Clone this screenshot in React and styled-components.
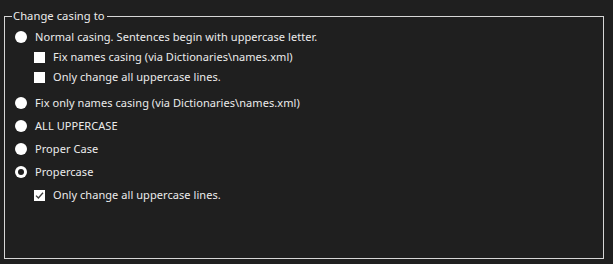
import React from "react";
import styled, { createGlobalStyle } from "styled-components";

const Global = createGlobalStyle`
  html, body { margin: 0; padding: 0; background: #1f1f1f; }
  body { font-family: "Noto Sans", "Open Sans", sans-serif; font-size: 11px; letter-spacing: 0.06px; color: #ececec; }
  #root { width: 613px; height: 264px; }
`;

const Page = styled.div`
  width: 613px;
  height: 264px;
  box-sizing: border-box;
  padding: 8px 0 0 4px;
  background: #1f1f1f;
`;

const Group = styled.fieldset`
  box-sizing: border-box;
  width: 600px;
  height: 251px;
  margin: 0;
  padding: 0;
  border: 1px solid #d6d6d6;
  min-inline-size: 0;
`;

const Legend = styled.legend`
  margin-left: 7px;
  padding: 0 2px 0 1px;
  font-size: 11.2px;
  line-height: 16px;
  color: #ececec;
`;

const Content = styled.div`
  display: flex;
  flex-direction: column;
  padding: 3px 0 0 10px;
`;

const Row = styled.label`
  display: flex;
  align-items: center;
  height: 20px;
  margin-top: ${(p) => p.$top || 0}px;
  padding-left: ${(p) => (p.$indent ? 19 : 0)}px;
  gap: 8px;
  white-space: nowrap;
`;

const Radio = styled.span`
  box-sizing: border-box;
  width: 12px;
  height: 12px;
  border-radius: 50%;
  background: #ffffff;
  position: relative;
  flex: none;
  &::after {
    content: "";
    display: ${(p) => (p.$checked ? "block" : "none")};
    position: absolute;
    left: 3px;
    top: 3px;
    width: 6px;
    height: 6px;
    border-radius: 50%;
    background: #1f1f1f;
  }
`;

const Box = styled.span`
  box-sizing: border-box;
  width: 11px;
  height: 11px;
  background: #ffffff;
  display: flex;
  align-items: center;
  justify-content: center;
  flex: none;
`;

const Text = styled.span`
  line-height: 16px;
`;

const Check = () => (
  <svg width="9" height="9" viewBox="0 0 9 9">
    <path d="M1 4.6 L3.4 7 L8 1.8" fill="none" stroke="#3a3a3a" strokeWidth="1.3" />
  </svg>
);

export default function App() {
  return (
    <>
      <Global />
      <Page>
        <Group>
          <Legend>Change casing to</Legend>
          <Content>
            <Row>
              <Radio />
              <Text>Normal casing. Sentences begin with uppercase letter.</Text>
            </Row>
            <Row $indent>
              <Box />
              <Text>Fix names casing (via Dictionaries\names.xml)</Text>
            </Row>
            <Row $indent>
              <Box />
              <Text>Only change all uppercase lines.</Text>
            </Row>
            <Row $top={6}>
              <Radio />
              <Text>Fix only names casing (via Dictionaries\names.xml)</Text>
            </Row>
            <Row $top={3}>
              <Radio />
              <Text>ALL UPPERCASE</Text>
            </Row>
            <Row $top={3}>
              <Radio />
              <Text>Proper Case</Text>
            </Row>
            <Row $top={3}>
              <Radio $checked />
              <Text>Propercase</Text>
            </Row>
            <Row $indent $top={3}>
              <Box>
                <Check />
              </Box>
              <Text>Only change all uppercase lines.</Text>
            </Row>
          </Content>
        </Group>
      </Page>
    </>
  );
}
